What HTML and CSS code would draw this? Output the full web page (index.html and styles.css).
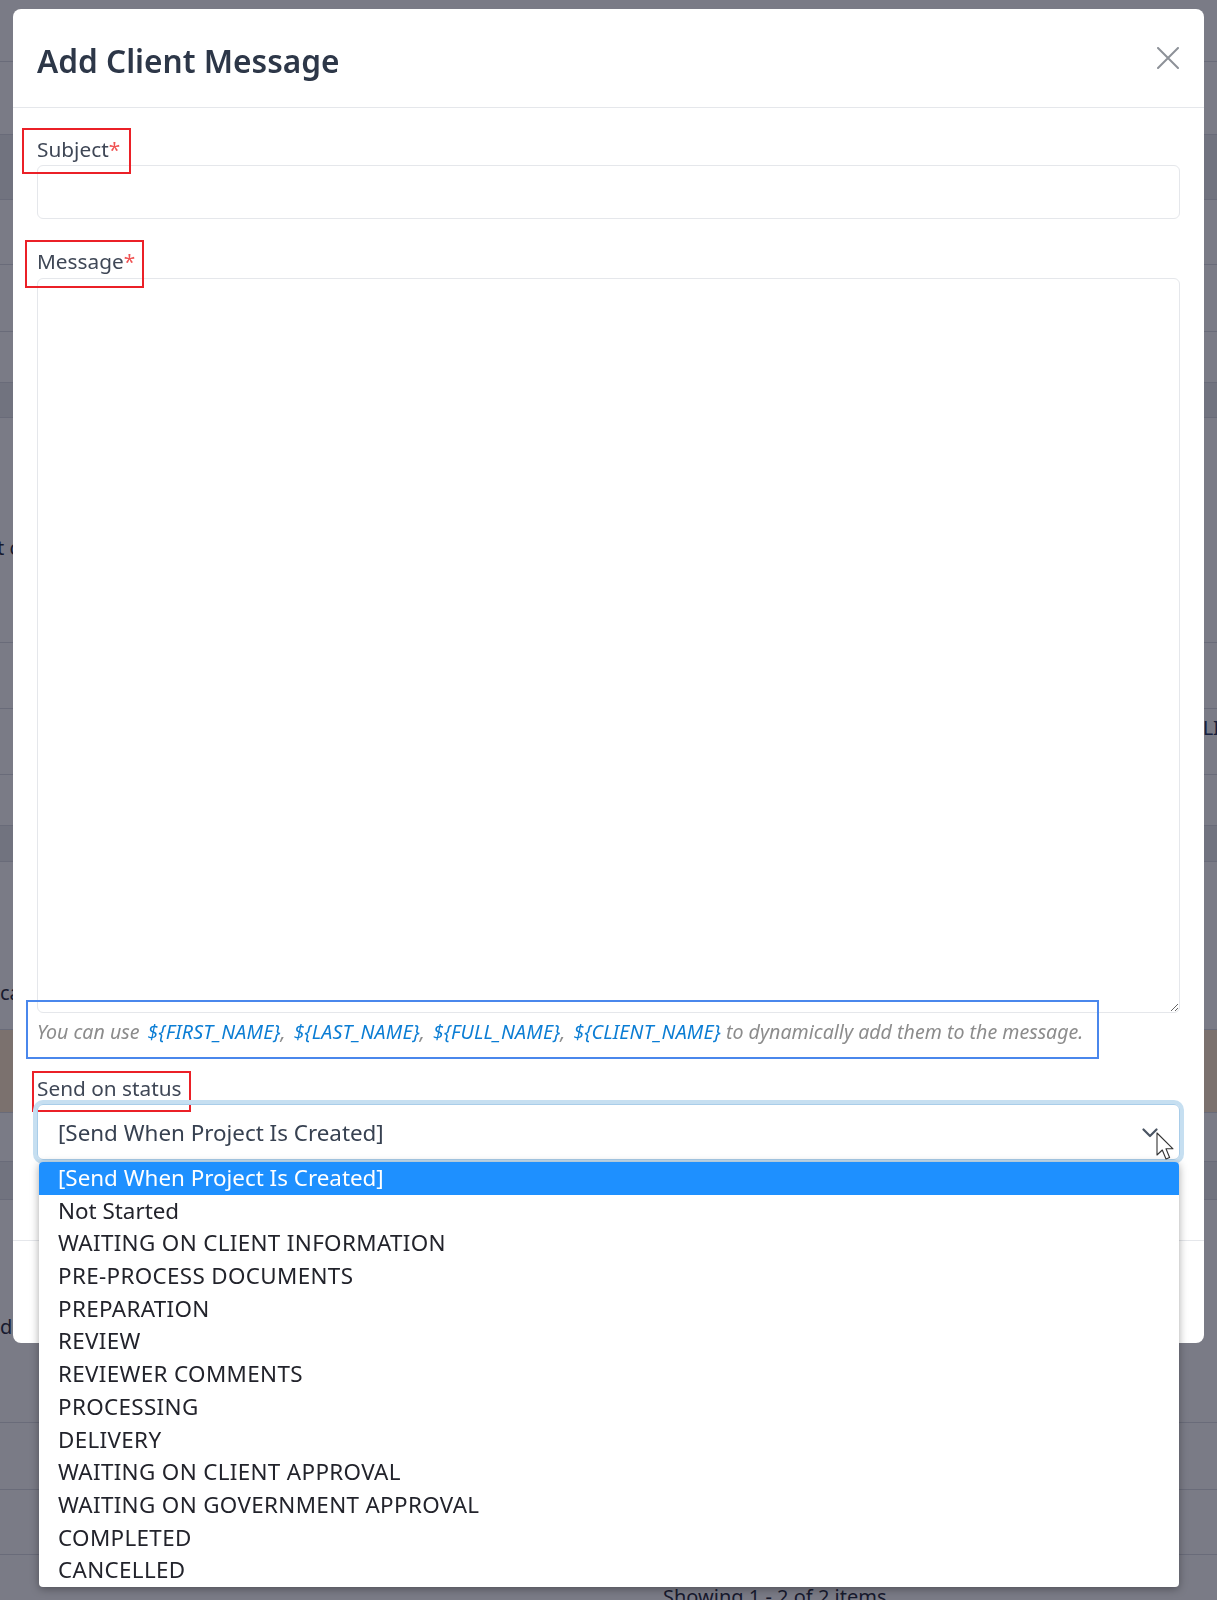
FILE: index.html
```html
<!DOCTYPE html>
<html>
<head>
<meta charset="utf-8">
<title>Add Client Message</title>
<link rel="stylesheet" href="styles.css">
</head>
<body>
<div class="page">
  <div class="bg-row"></div>
  <div class="bg-row"></div>
  <div class="bg-row band"></div>
  <div class="bg-row"></div>
  <div class="bg-row"></div>
  <div class="bg-row"></div>
  <div class="bg-row band"></div>
  <div class="bg-row frag frag-c"><span>t client</span></div>
  <div class="bg-row"></div>
  <div class="bg-row frag frag-lie"><span class="link">CLIENT</span></div>
  <div class="bg-row"></div>
  <div class="bg-row band"></div>
  <div class="bg-row frag frag-ca"><span>call</span></div>
  <div class="bg-row warn"></div>
  <div class="bg-row"></div>
  <div class="bg-row band"></div>
  <div class="bg-row frag frag-d"><span>ded</span></div>
  <div class="bg-row"></div>
  <div class="bg-row"></div>
  <div class="bg-row frag frag-showing"><span>Showing 1 - 2 of 2 items</span></div>
</div>
<div class="overlay"></div>

<div class="modal">
  <div class="modal-header">
    <h1 class="modal-title">Add Client Message</h1>
    <button class="close" type="button" aria-label="Close">
      <svg width="22" height="22" viewBox="0 0 22 22"><path d="M1 1 L21 21 M21 1 L1 21" stroke="#8d9198" stroke-width="2" stroke-linecap="round" fill="none"/></svg>
    </button>
  </div>
  <div class="modal-body">
    <div class="group">
      <label class="label">Subject<span class="req">*</span><span class="annot annot-subject"></span></label>
      <input class="input" type="text">
    </div>
    <div class="group">
      <label class="label">Message<span class="req">*</span><span class="annot annot-message"></span></label>
      <textarea class="textarea"></textarea>
    </div>
    <div class="help">You can use <span class="var">${FIRST_NAME}</span>, <span class="var">${LAST_NAME}</span>, <span class="var">${FULL_NAME}</span>, <span class="var">${CLIENT_NAME}</span> to dynamically add them to the message.<span class="annot-blue"></span></div>
    <div class="group status-group">
      <label class="label">Send on status<span class="annot annot-status"></span></label>
      <div class="select">
        <span class="select-value">[Send When Project Is Created]</span>
        <svg class="chevron" width="16" height="10" viewBox="0 0 16 10"><path d="M1.5 1.5 L8 8 L14.5 1.5" stroke="#4b5563" stroke-width="2.2" fill="none" stroke-linecap="round" stroke-linejoin="round"/></svg>
        <svg class="cursor" width="20" height="29" viewBox="0 0 20 29"><path d="M1 1 L1 23 L6.3 18 L10 27 L13.6 25.5 L10 16.8 L17 16.8 Z" fill="#fff" stroke="#333" stroke-width="1.1" stroke-linejoin="round"/></svg>
        <ul class="dropdown">
          <li class="opt mixed selected">[Send When Project Is Created]</li>
          <li class="opt mixed">Not Started</li>
          <li class="opt">WAITING ON CLIENT INFORMATION</li>
          <li class="opt">PRE-PROCESS DOCUMENTS</li>
          <li class="opt">PREPARATION</li>
          <li class="opt">REVIEW</li>
          <li class="opt">REVIEWER COMMENTS</li>
          <li class="opt">PROCESSING</li>
          <li class="opt">DELIVERY</li>
          <li class="opt">WAITING ON CLIENT APPROVAL</li>
          <li class="opt">WAITING ON GOVERNMENT APPROVAL</li>
          <li class="opt">COMPLETED</li>
          <li class="opt">CANCELLED</li>
        </ul>
      </div>
    </div>
  </div>
  <div class="modal-footer"></div>
</div>
</body>
</html>
```

FILE: styles.css
```css
* { box-sizing: border-box; margin: 0; padding: 0; }

html, body {
  width: 1217px;
  height: 1600px;
  overflow: hidden;
}

body {
  position: relative;
  background: #fbfbfb;
  font-family: "Noto Sans", "Open Sans", sans-serif;
  color: #1f2937;
}

/* page behind the modal */
.page {
  display: grid;
  grid-template-rows: 62px 73px 65px 65px 67px 51px 35px 225px 66px 66px 51px 36px 168px 83px 49px 38px 223px 67px 65px 60px;
  background: #fbfbfb;
}

.bg-row {
  border-bottom: 1px solid #d6d7dd;
  font-size: 20px;
  line-height: 28px;
  color: #1f2638;
  white-space: nowrap;
  overflow: hidden;
}

.band { background: #e7e8ec; }
.warn { background: #fde5c6; }

.frag-c { padding-top: 116px; text-indent: -3px; }
.frag-lie { padding-top: 5px; padding-left: 1190px; }
.frag-ca { padding-top: 117px; }
.frag-d { padding-top: 113px; }
.frag-showing { padding-top: 28px; padding-left: 663px; border-bottom: none; }
.link { color: #1b2f5c; }

.overlay {
  position: fixed;
  inset: 0;
  background: rgba(17, 19, 39, 0.55);
}

/* modal */
.modal {
  position: absolute;
  left: 13px;
  top: 9px;
  width: 1191px;
  background: #fff;
  border-radius: 8px;
}

.modal-header {
  height: 99px;
  display: flex;
  align-items: center;
  justify-content: space-between;
  padding: 0 25px 0 24px;
  border-bottom: 1px solid #e5e7eb;
}

.modal-title {
  font-size: 31.6px;
  font-weight: 600;
  color: #2d3748;
  padding-top: 4px;
}

.close {
  background: none;
  border: none;
  width: 22px;
  height: 22px;
  display: flex;
}

.modal-body {
  padding: 27px 24px 80px 24px;
}

.group + .group { margin-top: 28px; }
.group.status-group { margin-top: 30px; }

.label {
  position: relative;
  display: inline-block;
  font-size: 20.8px;
  line-height: 28px;
  color: #3f4756;
}

.req { color: #f05252; }

.annot {
  position: absolute;
  border: 2px solid #eb2027;
}
.annot-subject { left: -15px; top: -7px; width: 109px; height: 46px; }
.annot-message { left: -12px; top: -7px; width: 119px; height: 48px; }
.annot-status { left: -5px; top: -3px; width: 159px; height: 41px; }

.input {
  display: block;
  width: 100%;
  height: 54px;
  margin-top: 2px;
  border: 1px solid #e5e7eb;
  border-radius: 6px;
  outline: none;
  background: #fff;
}

.textarea {
  display: block;
  width: 100%;
  height: 735px;
  margin-top: 3px;
  border: 1px solid #e5e7eb;
  border-radius: 6px;
  outline: none;
  resize: vertical;
  font-family: inherit;
}

.help {
  position: relative;
  margin-top: 7px;
  font-size: 19.6px;
  line-height: 24px;
  font-style: italic;
  color: #8c8c8c;
  white-space: nowrap;
}

.var {
  color: #0b7dd4;
  margin-left: 3px;
  letter-spacing: 0.2px;
}

.annot-blue {
  position: absolute;
  left: -11px;
  top: -20px;
  width: 1073px;
  height: 59px;
  border: 2px solid #4a87ec;
}

.select {
  position: relative;
  margin-top: 2px;
  height: 56px;
  display: flex;
  align-items: center;
  padding-left: 20px;
  border: 1px solid #a9cde9;
  border-radius: 6px;
  box-shadow: 0 0 0 4px #c6dff1;
  font-size: 22.4px;
  color: #374151;
}

.select-value { flex: 1; }

.chevron {
  position: absolute;
  right: 21px;
  top: 23px;
}

.cursor {
  position: absolute;
  right: 3px;
  top: 27px;
  z-index: 3;
}

.dropdown {
  position: absolute;
  top: calc(100% + 3px);
  left: 1px;
  right: 0;
  list-style: none;
  background: #fff;
  border-radius: 4px;
  box-shadow: 0 2px 8px rgba(0, 0, 0, 0.35);
  overflow: hidden;
  z-index: 2;
}

.opt {
  height: 32.7px;
  line-height: 32.7px;
  padding-left: 19px;
  font-size: 22.4px;
  letter-spacing: 0.35px;
  color: #22232b;
  white-space: nowrap;
}

.opt.mixed { letter-spacing: 0; }

.opt.selected {
  background: #1e90ff;
  color: #fff;
}

.modal-footer {
  height: 103px;
  border-top: 1px solid #e5e7eb;
}
```
